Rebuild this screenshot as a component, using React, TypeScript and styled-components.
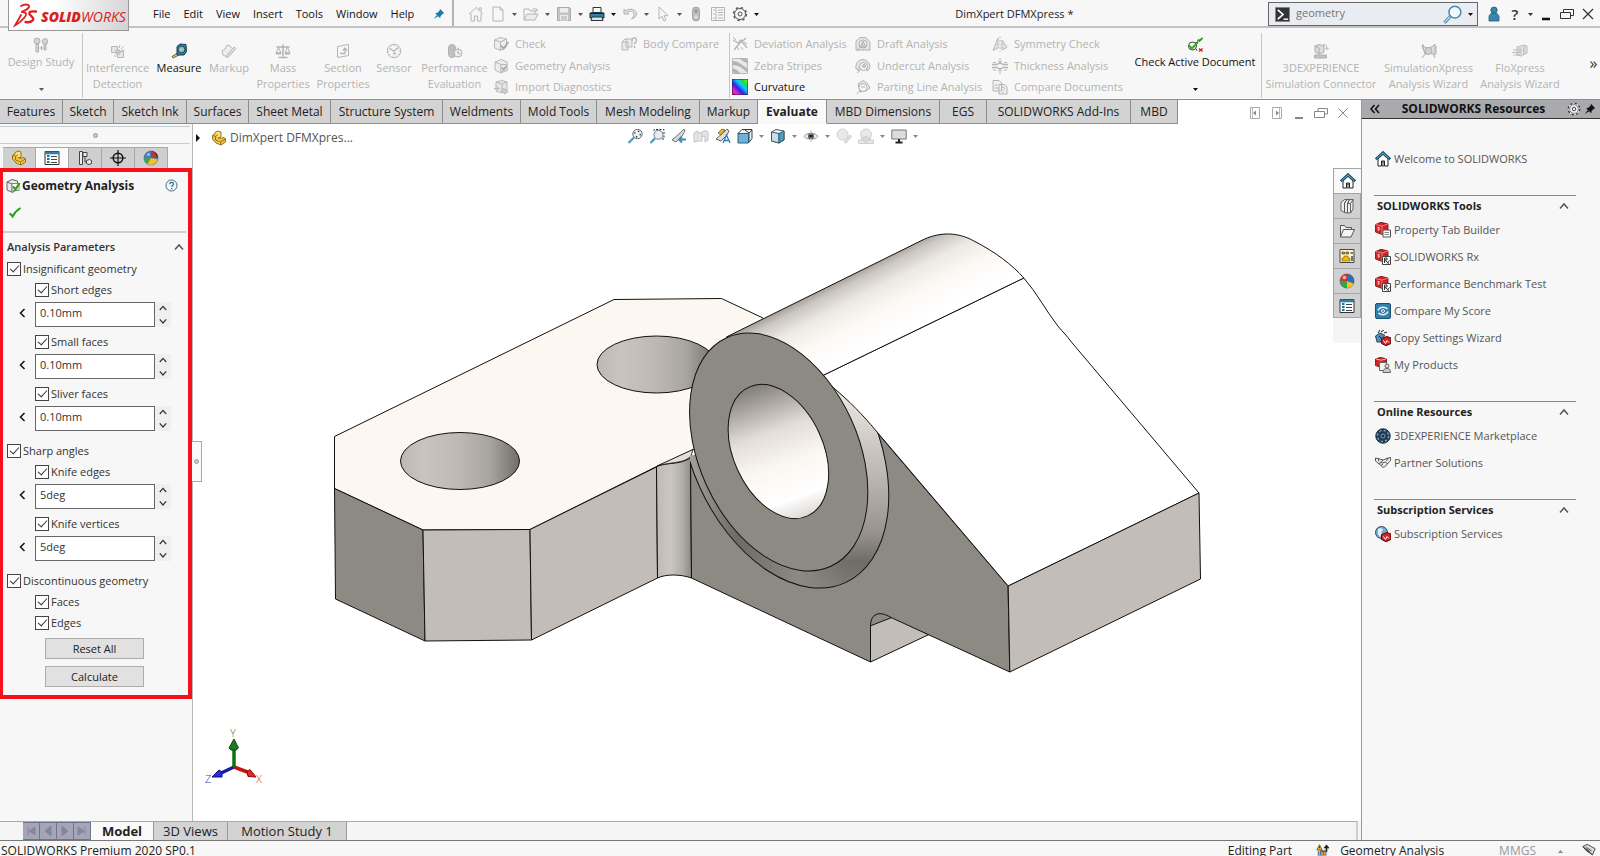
import React from 'react';
import styled, { createGlobalStyle } from 'styled-components';

const GlobalStyle = createGlobalStyle`
  *, *::before, *::after { box-sizing: border-box; }
  html, body { margin: 0; padding: 0; }
  body { font-family: "Open Sans", "Noto Sans", sans-serif; font-size: 11px; line-height: 16px; color: #222; background: #f6f6f6; overflow: hidden; }
  button, input { font: inherit; color: inherit; margin: 0; }
  button { border: 0; padding: 0; background: none; white-space: nowrap; cursor: pointer; }
  h1, h2 { margin: 0; font-size: 11px; line-height: 16px; }
  svg { display: block; flex: none; }
`;

/* ---------- icons ---------- */

const icons: Record<string, React.ReactNode> = {
  pin: <g fill="#1b79ac"><path d="M9 2l5 5-1.6.6-2.6 2.6-.4 2.6L3.6 7l2.6-.4 2.6-2.6z" /><path d="M5.5 9L2 13.6 7 10.6z" /></g>,
  pinDark: <g fill="#111"><path d="M9 2l5 5-1.6.6-2.6 2.6-.4 2.6L3.6 7l2.6-.4 2.6-2.6z" /><path d="M5.5 9L2 13.6 7 10.6z" /></g>,
  home: <g fill="none" stroke="#b4b4b4"><path d="M1 8l7-6.5L15 8" /><path d="M3 7.5V15h3.5v-5h3v5H13V7.5" /><path d="M11.5 3.5V1.8h1.7v3.4" /></g>,
  homeBlue: <g fill="none"><path d="M3 8v7h3.5v-5h3v5H13V8L8 3.4z" fill="#fff" stroke="#222" /><path d="M.8 8.4L8 1.6l7.2 6.8" stroke="#1d4e6e" strokeWidth="2.6" /><path d="M1.6 7.8L8 1.9l6.4 5.9" stroke="#5fb0dc" /><path d="M7 11h2v4H7z" stroke="#222" strokeWidth=".8" /></g>,
  page: <path d="M3 1h7l3 3v11H3zM10 1v3h3" fill="none" stroke="#b4b4b4" />,
  open: <g fill="none" stroke="#b4b4b4"><path d="M1 14V3h5l1 2h5v3" /><path d="M1 14l3-6h11l-3 6z" fill="#ececec" /><path d="M9 4c2-2 4-2 5 1m0-2.5V5h-2.5" /></g>,
  save: <g><path d="M1.5 1.5h12l1 1v12h-13z" fill="#c4c4c4" stroke="#aaa" /><path d="M4 2h8v4.5H4z" fill="#eee" /><path d="M4 9h8v5.5H4z" fill="#ededed" /><path d="M5 11h6M5 13h6" stroke="#aaa" /></g>,
  print: <g><path d="M4 1.5h8v5H4z" fill="#f8f8f8" stroke="#333" /><path d="M1 7h14v5H1z" fill="#2d81ad" stroke="#1b3340" /><path d="M1.5 6.5h13v1.5h-13z" fill="#222" /><path d="M3 11h10l1 3.5H2z" fill="#d5e8f1" stroke="#333" /></g>,
  undo: <path d="M2 3v5h5L5.2 6.3C8 4 12 5.4 12 8.6c0 1.8-1 3-2.5 4.4 3.5-1 5-3 5-5.200C14.500 3.700 8 1.500 3.800 4.800z" fill="#e2e2e2" stroke="#b0b0b0" />,
  cursor: <path d="M4 1v12l3-2.600L9 15l2-1-2-4.300h4z" fill="none" stroke="#b4b4b4" />,
  traffic: <g><rect x="4.500" y="1" width="7" height="14" rx="3.500" fill="#bcbcbc" stroke="#a5a5a5" /><circle cx="8" cy="5" r="1.800" fill="#999" /><circle cx="8" cy="11" r="1.800" fill="#ddd" /></g>,
  list: <g fill="none" stroke="#b4b4b4"><path d="M1.500 1.500h13v13h-13zM6 1.500v13" /><path d="M3 4h2M3 8h2M3 12h2M8 4h5M8 6.500h5M8 9h5M8 12h5" /></g>,
  gear: <g fill="none" stroke="#555"><circle cx="8" cy="8" r="5.500" /><circle cx="8" cy="8" r="2" /><circle cx="8" cy="8" r="6.500" strokeDasharray="2.500 2.600" strokeWidth="1.300" /></g>,
  gearLight: <g fill="#eee" stroke="#333"><circle cx="8" cy="8" r="6.500" strokeDasharray="2.500 2.600" strokeWidth="1.500" /><circle cx="8" cy="8" r="5" stroke="#777" /><circle cx="8" cy="8" r="2" /></g>,
  prompt: <g><path d="M.500 .500h15v15H.500z" fill="#333" stroke="#888" /><path d="M3 3l5.500 5L3 13" fill="none" stroke="#fff" strokeWidth="1.800" /><path d="M9 13h5" stroke="#fff" strokeWidth="1.500" /></g>,
  search: <g><circle cx="10" cy="6" r="5" fill="#f2f8fc" stroke="#4488ae" strokeWidth="1.200" /><path d="M6.300 9.500L1.300 14.800" stroke="#4488ae" strokeWidth="2.600" /><path d="M6 9.800L1.600 14.500" stroke="#d5e8f2" /></g>,
  user: <g fill="#3686ad" stroke="#235d79" strokeWidth=".800"><circle cx="8" cy="4.200" r="3.200" /><path d="M3 15v-4c0-2 1.500-3.500 3-3.500h4c1.500 0 3 1.500 3 3.500v4z" /></g>,
  min: <path d="M4 13h8" stroke="#111" strokeWidth="2.500" />,
  restore: <path d="M4.500 6.500V3.500h10v6h-3M1.500 6.500h10v6h-10z" fill="none" stroke="#333" />,
  close: <path d="M3 3l10 10M13 3L3 13" stroke="#333" strokeWidth="1.200" />,
  minGray: <path d="M4 13h8" stroke="#888" strokeWidth="2" />,
  restoreGray: <path d="M5 6V3.500h9.500v5.500h-3M1.500 6.500h10v6h-10z" fill="none" stroke="#888" />,
  closeGray: <path d="M3.500 3.500l9 9M12.500 3.500l-9 9" stroke="#888" />,
  paneLeft: <g><path d="M3.500 2.500h9v11h-9z" fill="none" stroke="#aaa" /><path d="M9 5.500v5L6 8z" fill="#888" /><path d="M5.500 3v10" stroke="#bbb" /></g>,
  paneRight: <g><path d="M3.500 2.500h9v11h-9z" fill="none" stroke="#aaa" /><path d="M7 5.500v5L10 8z" fill="#888" /><path d="M10.500 3v10" stroke="#bbb" /></g>,
  study: <g fill="#d5d5d5" stroke="#b0b0b0"><circle cx="4" cy="4" r="3" /><path d="M3 7h2.500v8H3zM11 7h2v6h-2z" /><circle cx="12" cy="4.500" r="2.800" /><path d="M6.500 11h4M8.500 9v4" /></g>,
  interfere: <g fill="#e6e6e6" stroke="#b8b8b8"><path d="M1.500 3.500h6v6h-6zM7.500 8.500h6v6h-6z" /><path d="M9 5l1-3M11 6l3-3M11.500 7.500l3-.500M4 12.500l2 1" /><path d="M6 7h4v4H6z" fill="#ccc" /></g>,
  measure: <g><path d="M1 13.500l6-4 1 2.500-6 3z" fill="#efc532" stroke="#333" strokeWidth=".700" /><path d="M6 3.500L9 1l6 .500.500 7L13 12H6z" fill="#2b80ab" stroke="#163d52" /><circle cx="10.500" cy="6.500" r="3.400" fill="#7bbfe0" stroke="#194a64" /><circle cx="10.500" cy="6.500" r="1.300" fill="#efc532" /></g>,
  markup: <g fill="#eee" stroke="#b8b8b8"><path d="M6 2l3 1 3 3-2 5-5 2.500L2 12l-1-4 3-2z" /><path d="M6 12l7-8 2 1.500-7 8-2.500 1z" fill="#ddd" /></g>,
  mass: <g fill="none" stroke="#b2b2b2"><path d="M8 1.500v12M3.500 14.500h9M1.500 4h13" strokeWidth="1.500" /><path d="M1 10l2.500-5.500L6 10zM10 10l2.500-5.500L15 10z" /><path d="M1 10.500h5M10 10.500h5" strokeWidth="2" /></g>,
  section: <g fill="none" stroke="#b4b4b4"><path d="M2.500 3.500l11-2v11l-11 2z" /><path d="M5 10.500h5V6M8 7.500L10 5l2 2.500" strokeWidth="1.300" /></g>,
  sensor: <g fill="none" stroke="#b4b4b4"><circle cx="8" cy="8" r="6.700" /><circle cx="8" cy="8" r="5.300" strokeDasharray="1 2" /><path d="M4 5.500l4 3 4-4M7 10.500h3" strokeWidth="1.300" /></g>,
  perf: <g fill="#d8d8d8" stroke="#b0b0b0"><rect x="1.500" y="1.500" width="7" height="13" rx="3.500" fill="#c3c3c3" /><circle cx="5" cy="5" r="1.500" /><circle cx="5" cy="9.500" r="1.500" /><circle cx="11" cy="10" r="4" fill="#eee" /><path d="M11 7.500V10l2 1M11 4.500v1.500" /></g>,
  check: <g fill="#ececec" stroke="#b8b8b8"><path d="M1.500 4L7 1.500 13.500 3v8L8 14.500 1.500 12zM1.500 4L7.500 6v8M7.500 6l6-3" /><path d="M8 9.500l2.500 3L15.500 6" fill="none" stroke="#a8a8a8" strokeWidth="1.800" /></g>,
  geom: <g fill="#ececec" stroke="#b8b8b8"><path d="M2 4l6-2.500L14 4v8l-6 3-6-3zM2 4l6 2.500V15" /><path d="M8 6.500h6v6.500H8z" /><path d="M9 9.500l1.800 2L13.500 8" fill="none" stroke="#a5a5a5" strokeWidth="1.500" /></g>,
  diag: <g fill="#e6e6e6" stroke="#b8b8b8"><path d="M3 3l6-1.500L14 3v8l-5 3-6-2zM3 3l6 2v9M9 5l5-2" /><path d="M1 9.500h5l-2-2M6 9.500l-2 2" fill="none" /><path d="M8 11.500l2-2 3 1 2 2-3 2.500z" fill="#ccc" /></g>,
  bodycmp: <g fill="#eaeaea" stroke="#b8b8b8"><path d="M1 6h6v8H1zM5 3h6v8H5zM1 6l3-3h2" /><path d="M11 5c0-4 4.500-4 4.500-1 0 2-2 2-2 4.500M13.500 10v2" fill="none" strokeWidth="1.500" /></g>,
  deviation: <g fill="none" stroke="#b4b4b4"><path d="M1 4l5 3 3-3 6 8M2 14l5-6 7-6" strokeWidth="1.300" /><path d="M1 1l3 3M12 6l3 2M9 11l2 3M4 10l3 4" /></g>,
  zebra: <g><path d="M.500 .500h15v15H.500z" fill="#e8e8e8" stroke="#bbb" /><path d="M0 3c6 0 9 3 16 8v4C9 9 6 7 0 7zM5 0c4 1 7 4 11 6V2.500L12 0zM0 10.500c4 0 6 2 9 5.500H4.500L0 14z" fill="#b3b3b3" /></g>,
  curvature: <g><path d="M0 0h16v16H0z" fill="url(#rainbow)" stroke="#222" /></g>,
  draft: <g fill="#e4e4e4" stroke="#b4b4b4"><path d="M1 14V5l4-3.500h6l4 5V14z" /><circle cx="8" cy="8" r="4" fill="#f2f2f2" /><path d="M8 5l3 6H5zM5 11l-3 4" fill="#ccc" /></g>,
  undercut: <g fill="#e4e4e4" stroke="#b4b4b4"><path d="M1 11C0 5 4 1.500 8 1.500S16 6 14.500 11L12 13V9H4v4z" /><circle cx="8.500" cy="8.500" r="4" fill="#f2f2f2" /><path d="M6 11.500L2 15M7 8l2-2 2 2-2 2z" fill="#ccc" /></g>,
  parting: <g fill="#ebebeb" stroke="#b4b4b4"><path d="M3 5l5-3.500L12 4l3 5-4 3-6 1z" /><circle cx="8" cy="8.500" r="4" fill="#f5f5f5" /><path d="M5.500 11.500L1.500 15M6 8h4" /></g>,
  symmetry: <g fill="#e2e2e2" stroke="#b8b8b8"><path d="M6 2v10l-5 2.500zM10 4v10l5-2.500z" /><path d="M8 .500v15" strokeDasharray="2 1.500" /></g>,
  thickness: <g fill="none" stroke="#b4b4b4"><path d="M0 6.500h5c2-1.500 4-1.500 6 0h5M0 9.500h5c2 1.500 4 1.500 6 0h5" strokeWidth="1.300" /><path d="M8 0v5M6 3l2 2 2-2M8 16v-5M6 13l2-2 2 2M1 4.500h3M12 4.500h3M1 12h3M12 12h3" /></g>,
  cmpdocs: <g fill="#f0f0f0" stroke="#b4b4b4"><path d="M1 1.500h6l2.500 2.500v8H1zM7 5.500h5.500L15 8v7H7z" /><path d="M2.500 9h4M2.500 6h3M9.500 9.500c0-2 3-2 3 0 0 1-1.500 1-1.500 2.500" fill="none" /><path d="M11 13v1" /></g>,
  checkDoc: <g fill="none"><circle cx="5.500" cy="9" r="4" stroke="#444" /><path d="M2 8.500l3 3L11 5" stroke="#3da532" strokeWidth="2" /><path d="M8.500 6L11 3.500M9 12.500l2 1" stroke="#222" strokeDasharray="1.500 1" /><path d="M11 2.500l1.500 1.500L15.500 1" stroke="#2d9a25" strokeWidth="1.800" /><path d="M12 11.500l3.500 3M15.500 11.500l-3.500 3" stroke="#d8231f" strokeWidth="1.500" /></g>,
  simcon: <g fill="#ddd" stroke="#aeaeae"><path d="M2 3l4-1.500 5 1.500v6L6 11 2 9zM2 3l4 2v6" /><path d="M1.500 12h12v3h-12z" fill="#c4c4c4" /><path d="M10 2c3-1 4 1 4 4M12.500 5l1.500 1.500L15.500 5" fill="none" /></g>,
  simx: <g fill="#e0e0e0" stroke="#aeaeae"><path d="M1 2l4 3 6-1 3-3v11l-3-2-7 1z" /><circle cx="7.500" cy="8" r="3.500" fill="#d0d0d0" /><path d="M4.500 10.500L1 15M12 11l2 4M2 1v5M15 3v8" /></g>,
  flo: <g fill="#eee" stroke="#bcbcbc"><path d="M5 4l7-2 3 1v7l-6 3-4-1z" /><path d="M7 4v8M9 3.500v9M11.500 3v8.500M13 3v8M1 7h9M0 9.500h9M1 12h6" /></g>,
  part: <g fill="#f3c53a" stroke="#8b6510" strokeWidth=".900"><path d="M1.500 5.500L4 3.500l3 1v3l3 1 2-1 2.500 1V12L10 15l-5-2-3.500-4z" /><path d="M1.500 5.500l3 1v3.500L9.500 12V15M4.500 6.500L7 4.500M9.500 12l5-3M4 3.500v-1L7 1l3 1v5l-3 1" fill="#ffe07a" /></g>,
  props: <g><path d="M1 1.500h14v13H1z" fill="#fff" stroke="#333" /><path d="M1 1.500h14v2.800H1z" fill="#2f7fa8" /><path d="M3 6h2.500M3 9h2.500M3 12h2.500" stroke="#1d6f9d" strokeWidth="2" /><path d="M7 6.500h6M7 9.500h6M7 12.500h6" stroke="#444" /></g>,
  config: <g fill="#eee" stroke="#444"><path d="M2.500 1.500h3v13h-3z" /><path d="M6 2.500h4v4H6zM9.500 10.500l3-1 2 1v3l-2.500 1-2.500-1z" /><path d="M8 7v5h2" fill="none" /></g>,
  target: <g fill="none" stroke="#111" strokeWidth="1.500"><circle cx="8" cy="8" r="4.800" /><path d="M8 0v16M0 8h16" strokeWidth="1.200" /></g>,
  ball: <g><circle cx="8" cy="8" r="7" fill="#2c6dc4" stroke="#444" strokeWidth=".600" /><path d="M8 8L1 7.500A7 7 0 0 0 8 15z" fill="#36a344" /><path d="M8 8v7a7 7 0 0 0 6.500-4.500z" fill="#f3c422" /><path d="M8 8V1a7 7 0 0 0-5.500 2.700L1.200 7.500z" fill="#de3328" /><circle cx="5.500" cy="4.500" r="1.800" fill="#fff" opacity=".600" /></g>,
  ballDark: <g><circle cx="8" cy="8" r="7" fill="#3c7ed0" stroke="#555" strokeWidth=".600" /><path d="M8 8L1 8.500A7 7 0 0 0 4.500 14z" fill="#43a548" /><path d="M8 8l-3.500 6A7 7 0 0 0 14.800 9.500z" fill="#f1c22b" /><path d="M8 8V1a7 7 0 0 1 7 7z" fill="#222" /><path d="M8 8V1a7 7 0 0 1 3 .8L15 8z" fill="#c93129" /><circle cx="5.500" cy="4.500" r="1.600" fill="#fff" opacity=".500" /></g>,
  geomGreen: <g fill="#e8e8e8" stroke="#666"><path d="M1 4l5-2.500L11.500 3v8l-5 3.500L1 12zM1 4l5 2v8" /><path d="M6 5.500h7v7H6z" fill="#fff" stroke="#888" /><path d="M7 8.500l2.500 3L13.500 5" fill="none" stroke="#2fa21e" strokeWidth="2.200" /></g>,
  help: <g><circle cx="8" cy="8" r="6.800" fill="#f2f7fa" stroke="#41667d" strokeWidth="1.200" /><path d="M5.800 6.500c0-3 4.600-3 4.600 0 0 1.500-2.200 1.500-2.200 3.300M8.200 11v1.500" fill="none" stroke="#23688e" strokeWidth="1.500" /></g>,
  ok: <path d="M2.500 9.500c1.500.500 2 1.500 3 3C7.500 8.500 10 6 13.500 4" fill="none" stroke="#2c9b1f" strokeWidth="2" />,
  zoomFit: <g><circle cx="10.500" cy="6" r="4.700" fill="#eef4f7" stroke="#667" /><circle cx="10.500" cy="6" r="2.800" fill="none" stroke="#333" strokeWidth="1.300" strokeDasharray="1.500 2.900" /><path d="M7 9.500L1.500 15" stroke="#5a9cc0" strokeWidth="2.400" /></g>,
  zoomArea: <g><path d="M5 3V1.500h10V11h-2" fill="none" stroke="#333" strokeDasharray="2 1.500" /><circle cx="9.500" cy="6.800" r="4.500" fill="#e6eef2" stroke="#778" /><path d="M6 10.300L1.500 15" stroke="#5a9cc0" strokeWidth="2.400" /></g>,
  prevView: <g><path d="M1 12l8-7 4-4 1 2-3 5-6 6z" fill="#d8d8d8" stroke="#777" /><path d="M15 11.500H8.500m2.500-3l-3 3 3 3" fill="none" stroke="#3a8cba" strokeWidth="2" /></g>,
  sectionView: <g fill="#e6e6e6" stroke="#c4c4c4"><path d="M1 5l4-2v10l-4 1zM7 5l5-2.500L15 4v8l-3 2V8L7 9z" /><path d="M5 5h4v8H5" /></g>,
  dynAnn: <g><path d="M1 11l8-7 3-3 2 2-2 4-6 6z" fill="#ddd" stroke="#666" /><path d="M3 5l4-4 3 1-4 5z" fill="#f0b429" stroke="#7a5a10" strokeWidth=".800" /><path d="M8 15l3.500-8 3.500 8M9.500 12.500h4" fill="none" stroke="#2c7fb0" strokeWidth="1.300" /></g>,
  viewOri: <g><path d="M5 1.500h10v9l-3 4" fill="#eee" stroke="#444" /><path d="M8 2l4 3 3-3M12 5v9" stroke="#444" fill="none" /><path d="M1 5.500h10.500V15H1z" fill="#6db3d6" stroke="#2a5e7b" /><path d="M1 5.500l4-4M5 1.500h10" stroke="#333" /></g>,
  display: <g stroke="#3c5a69"><path d="M1.500 4L6 1.500 14 3v9l-5 3-7.500-2z" fill="#f2f6f8" /><path d="M1.500 4L9 5.500V15l-7.500-2z" fill="#c9dde8" /><path d="M9 5.500L14 3v9l-5 3z" fill="#4f9cc4" /></g>,
  eye: <g><path d="M1 8.500C4 4 12 4 15 8.500 12 12 4 12 1 8.500z" fill="#eee" stroke="#999" /><circle cx="8" cy="8.200" r="3" fill="#555" /><path d="M8 2v12" stroke="#bbb" /><circle cx="8" cy="8" r="1.200" fill="#111" /></g>,
  appear: <g fill="#e8e8e8" stroke="#d0d0d0"><circle cx="6.500" cy="6.500" r="5.500" /><path d="M8 14l6-7 1.500 1.500L10 15z" fill="#ddd" /></g>,
  scene: <g fill="#e8e8e8" stroke="#d0d0d0"><path d="M.500 12h15v3.500H.500z" /><circle cx="8" cy="6.500" r="5.500" /><path d="M3 11l5-3 5 3-5 4z" fill="#d8d8d8" /></g>,
  monitor: <g><path d="M.800 2h14.400v9H.800z" fill="#dcdcdc" stroke="#777" /><path d="M8 11v3M4.500 14.500h7" stroke="#222" strokeWidth="2" /></g>,
  books: <g fill="#eee" stroke="#555" strokeWidth=".900"><path d="M2 4.500l3.500-3H8L5.500 5v9.500L2 12.500zM5.500 5L8 1.500h2.500L8.500 5.500v9.500l-3-.500zM8.500 5.500l2-4H14v9.500l-2.500 4h-3z" /><path d="M11.500 5.500L14 1.500M8.500 5.500h3V15" fill="none" /></g>,
  folder: <g fill="#eee" stroke="#555"><path d="M1.500 14V2.500h4l1.500 2h5.500V7" /><path d="M1.500 14l3-7.500H15.500L12 14z" fill="#f5f5f5" /></g>,
  palette: <g><path d="M1 1.500h14v13H1z" fill="#fff6c8" stroke="#444" /><path d="M3 4h2.500v2H3zM7 4h2.500v2H7z" fill="#e6b000" stroke="#222" strokeWidth=".600" /><path d="M5 8h4v2h2v3H3v-3h2z" fill="#e9bb15" stroke="#7a5a00" strokeWidth=".600" /><path d="M11.500 4h2.500v2h-2.500zM12 8h2.500v5H12z" fill="#777" /></g>,
  swTab: <g><path d="M.500 2.500L6 .300l7 1.700v7.500L7 12.500.500 10z" fill="#cf2327" stroke="#6b0d10" strokeWidth=".800" /><path d="M.500 2.500l6.500 1.500 6-2M7 4v8.500" stroke="#f39a9c" strokeWidth=".800" fill="none" /><path d="M2.500 5.800c1.800-.800 2.400.200 1 1 1.500.500.800 1.800-.800 1.200" stroke="#fff" fill="none" /><path d="M8 8h7.500v7H8z" fill="#fff" stroke="#555" /><path d="M9.500 10.500h4.500M9.500 12.500h4.500" stroke="#888" /></g>,
  swRx: <g><path d="M.500 2.500L6 .300l7 1.700v7.500L7 12.500.500 10z" fill="#cf2327" stroke="#6b0d10" strokeWidth=".800" /><path d="M.500 2.500l6.500 1.500 6-2M7 4v8.500" stroke="#f39a9c" strokeWidth=".800" fill="none" /><path d="M2.500 5.800c1.800-.800 2.400.200 1 1 1.500.500.800 1.800-.800 1.200" stroke="#fff" fill="none" /><path d="M7.500 7.500h8v8h-8z" fill="#fff" stroke="#444" /><path d="M9.500 14V9h2.500v2H9.500l4.500 3.500M14.500 11.500l-2.500 3" stroke="#333" fill="none" /></g>,
  score: <g><rect x=".500" y=".500" width="15" height="15" rx="1.500" fill="#3280ab" stroke="#1d4f6d" /><path d="M3 7.500C5 3.500 10 3.500 12.500 6M13 8.500c-2 4-7 4-9.500 1.500" fill="none" stroke="#e6f2f8" strokeWidth="1.600" /><circle cx="8" cy="8" r="1.500" fill="none" stroke="#e6f2f8" /></g>,
  copy: <g><path d="M.500 6l4.500-3 4.500 2-2 7H2z" fill="#4a92bd" stroke="#222" strokeWidth=".800" /><path d="M3 3l2-3M6 2l3-2M9 3l3-1M4 6l6 6" stroke="#222" /><path d="M6.500 8.500l5.500-2 4 1.500v5.500L11 15.700 6.500 13.500z" fill="#cf2327" stroke="#5a0a0c" /><path d="M8.500 10.500l2 3 1.500-3 2 2" stroke="#fff" fill="none" /></g>,
  products: <g><path d="M.500 2L5.500 .300 11.500 2v6.500L6 10.500.500 8.500z" fill="#cf2327" stroke="#6b0d10" strokeWidth=".800" /><path d="M1 2l5 1.200L11 2" stroke="#fff" strokeWidth=".700" fill="none" /><path d="M4.500 5.500h7v8h-7z" fill="#eef5ea" stroke="#666" /><circle cx="12" cy="9" r="2" fill="#ddd" stroke="#666" /><path d="M8 15.500c0-3 1.500-4 4-4s3.500 1 3.500 4z" fill="#ccc" stroke="#666" /></g>,
  market: <g><circle cx="8" cy="8" r="7.200" fill="#24435f" stroke="#14283a" /><circle cx="8" cy="8" r="5.600" fill="none" stroke="#8fa9bf" strokeDasharray="2 2.400" strokeWidth="1.300" /><circle cx="8" cy="8" r="3.300" fill="#5a7f9f" stroke="#102a40" /><circle cx="8" cy="8" r="1.200" fill="#17344e" /></g>,
  shake: <g fill="#eee" stroke="#444" strokeWidth=".900"><path d="M.500 3l2.500.500L8 5l5-2 2.500-.500v3L9.500 12 8 12.300.500 6z" /><path d="M8 5L6 7.500l2 .500 2-1 3 2M4 8.500l2-1M6 10.500l2-1.500M13 3l-1.500 3M3 3.500l1 3" fill="none" /></g>,
  globe: <g><circle cx="6.500" cy="6.500" r="6" fill="#78acd0" stroke="#274d66" /><path d="M3 3l3-1 2 2-2 2 1 2-2 3-2-3z" fill="#e4f0f7" /><path d="M6.500 8.500l5.500-2 4 1.500v5.500L11 15.700 6.500 13.500z" fill="#cf2327" stroke="#5a0a0c" /><path d="M8.500 10.500l2 3 1.500-3 2 2" stroke="#fff" fill="none" /></g>,
  rebuild: <g><path d="M1 8l3-6 3 6z" fill="#f4c430" stroke="#6b4d00" /><path d="M4 4v2" stroke="#222" /><path d="M5 9.500h7V4M9.500 6L12 3l2.500 3" fill="none" stroke="#222" strokeWidth="1.800" /><path d="M2 9.500h10v5H2z" fill="#3a78c2" /><path d="M4 10v5M7 10v5M10 10v5" stroke="#f7a928" strokeWidth="1.500" /></g>,
  tag: <g fill="#ddd" stroke="#333"><path d="M1 4l5-2.500 9 5-3 7z" /><path d="M1 4l4 5 7 4.500M5 5l6 4M4 6l5 4" fill="none" /></g>,
};

const Icon = ({ name, size = 16 }: { name: string; size?: number }) => (
  <svg width={size} height={size} viewBox="0 0 16 16" aria-hidden="true">{icons[name]}</svg>
);

const Caret = ({ color = '#555', up = false }: { color?: string; up?: boolean }) => (
  <svg width="5" height="5" viewBox="0 0 5 5" aria-hidden="true"><path d={up ? 'M0 4h5L2.500 1z' : 'M0 1h5L2.500 4z'} fill={color} /></svg>
);

const Chevron = ({ dir, color = '#333', w = 10 }: { dir: 'up' | 'down' | 'left'; color?: string; w?: number }) => {
  const d = { up: 'M1 7.500L5 3l4 4.500', down: 'M1 3l4 4.500L9 3', left: 'M7.500 1L3.500 5l4 4' }[dir];
  return <svg width={w} height={w} viewBox="0 0 10 10" aria-hidden="true"><path d={d} fill="none" stroke={color} strokeWidth="1.500" /></svg>;
};

/* ---------- shell and title bar ---------- */

const Shell = styled.div`
  display: flex; flex-direction: column; height: 100vh; min-height: 600px; overflow: hidden;
`;
const TitleBar = styled.header`
  position: relative; display: flex; align-items: center; height: 28px; flex: none;
  padding: 2px 0 0 153px; border-bottom: 2px solid #c3c3c3; background: #f7f7f7;
`;
const Logo = styled.div`
  position: absolute; z-index: 2; left: 8px; top: 0; width: 121px; height: 31px; padding: 1px 3px 0 4px;
  display: flex; align-items: center; gap: 3px; border: 1px solid #999; border-top: 0;
  background: linear-gradient(110deg, #fff 35%, #d2d2d4); color: #d8211d;
  font-size: 14px; font-style: italic; line-height: 16px;
  span { padding-top: 3px; }
  b { font-weight: 800; }
`;
const Menu = styled.nav` display: flex; gap: 13px; `;
const MenuItem = styled.button` color: #111; line-height: 24px; `;
const PinButton = styled.button` margin-left: 18px; `;
const ToolStrip = styled.div<{ $left?: number }>` display: flex; align-items: center; gap: 6px; margin-left: ${(p) => p.$left ?? 0}px; `;
const ToolButton = styled.button` display: flex; align-items: center; gap: 6px; height: 24px; `;
const BarSplit = styled.i` width: 2px; height: 26px; margin: 0 0 2px 6px; background: #b2b2b2; `;
const DocTitle = styled.h1` margin-left: 196px; font-weight: 400; white-space: nowrap; color: #222; `;
const SearchBox = styled.form`
  display: flex; align-items: center; gap: 6px; width: 210px; height: 24px; margin-left: auto; padding: 0 4px 0 6px;
  border: 1px solid #666; background: #e9ecf0; color: #777;
  input { flex: 1; min-width: 0; border: 0; padding: 0 0 2px; background: none; outline: 0; }
`;
const WindowControls = styled.div`
  display: flex; align-items: center; gap: 5px; padding: 0 4px 0 8px;
  b { display: block; width: 16px; text-align: center; font-size: 15px; font-weight: 600; line-height: 16px; color: #333; }
`;

/* ---------- ribbon ---------- */

const Ribbon = styled.div`
  display: flex; flex: none; height: 72px; padding-top: 5px; background: #f7f7f7; border-bottom: 1px solid #8e8e8e; color: #b3b3b3;
`;
const RibbonGroup = styled.div<{ $grow?: boolean; $line?: boolean; $pad?: number }>`
  display: flex; flex: ${(p) => (p.$grow ? '1 1 auto' : 'none')}; padding-left: ${(p) => p.$pad ?? 0}px;
  border-right: ${(p) => (p.$line ? '1px solid #c6c6c6' : '0')};
  height: 65px;
`;
const BigButton = styled.button<{ $w: number; $active?: boolean; $high?: boolean }>`
  display: flex; flex-direction: column; align-items: center; flex: none; width: ${(p) => p.$w}px;
  padding-top: ${(p) => (p.$high ? 4 : 10)}px; color: ${(p) => (p.$active ? '#111' : '#b3b3b3')};
  line-height: 16px; gap: 1px;
  > svg:last-child:not(:first-child) { margin-top: 16px; }
`;
const SmallColumn = styled.div<{ $w: number }>` display: flex; flex-direction: column; flex: none; width: ${(p) => p.$w}px; `;
const SmallButton = styled.button<{ $active?: boolean }>`
  display: flex; align-items: center; gap: 6px; height: 22px; color: ${(p) => (p.$active ? '#111' : '#b3b3b3')};
`;
const More = styled.button` margin-left: auto; width: 13px; height: 60px; font-size: 16px; color: #333; `;

/* ---------- document area ---------- */

const Body = styled.div` display: flex; flex: 1; min-height: 0; `;
const DocumentColumn = styled.div` display: flex; flex-direction: column; flex: 1; min-width: 0; `;
const TabRow = styled.div` display: flex; flex: none; height: 24px; background: #fff; `;
const RibbonTab = styled.button<{ $w: number; $on?: boolean }>`
  flex: none; width: ${(p) => p.$w}px; font-size: 12px;
  border-right: 1px solid #8d8d8d; border-bottom: 1px solid ${(p) => (p.$on ? '#f7f7f7' : '#8d8d8d')};
  background: ${(p) => (p.$on ? '#f9f9f9' : '#d3d3d3')}; font-weight: ${(p) => (p.$on ? 700 : 400)}; color: #222;
`;
const DocControls = styled.div` display: flex; align-items: center; gap: 6px; margin-left: auto; padding: 1px 10px 0 0; `;
const Work = styled.div` display: flex; flex: 1; min-height: 0; `;

const SidePanel = styled.aside`
  position: relative; display: flex; flex-direction: column; flex: none; width: 193px;
  background: #f7f7f7; border-right: 1px solid #b8b8b8;
`;
const Grip = styled.div`
  display: flex; flex: none; align-items: center; justify-content: center; height: 18px; margin: 2px 2px 3px 0;
  border-top: 1px solid #c2cdd2; border-bottom: 1px solid #ccc;
`;
const GripDot = styled.i` width: 5px; height: 5px; border-radius: 50%; background: #ccc; border: 1px solid #999; `;
const PanelTabs = styled.div` display: flex; flex: none; height: 21px; padding-left: 3px; `;
const PanelTab = styled.button<{ $on?: boolean }>`
  display: flex; align-items: center; justify-content: center; width: 33px; border: 1px solid #a8a8a8; border-left: 0; border-bottom: 0;
  background: ${(p) => (p.$on ? '#fafafa' : '#cfcfcf')};
`;
const PropertyPage = styled.form` flex: none; border: 4px solid #f5101c; border-left-width: 3px; padding-bottom: 8px; `;
const PageTitle = styled.div`
  display: flex; align-items: center; height: 28px; padding: 0 10px 1px 3px; color: #222;
  h2 { flex: 1; font-size: 12px; }
`;
const OkRow = styled.div` display: flex; align-items: flex-start; height: 33px; padding: 4px 0 0 4px; border-bottom: 2px solid #d0d0d0; margin: 0 2px 3px 0; `;
const SectionHead = styled.div` display: flex; align-items: center; justify-content: space-between; height: 22px; padding: 0 4px; h2 { color: #333; font-weight: 600; } `;
const CheckLabel = styled.label<{ $sub?: boolean }>`
  display: flex; align-items: center; gap: 2px; height: 21px; padding-left: ${(p) => (p.$sub ? 32 : 4)}px; color: #333;
`;
const Tick = styled.input`
  appearance: none; flex: none; width: 14px; height: 14px; border: 1px solid #444; background: #fff; display: grid; place-items: center;
  &:checked::before { content: ""; width: 9px; height: 5px; margin-bottom: 3px; border: solid #333; border-width: 0 0 1px 1px; transform: rotate(-48deg); }
`;
const FieldRow = styled.div` display: flex; align-items: center; height: 25px; margin: 2px 0 4px; padding-left: 14px; > svg { margin-bottom: 4px; } `;
const FieldInput = styled.input` width: 120px; height: 25px; margin-left: 8px; padding: 0 4px 4px; border: 1px solid #666; background: #fff; color: #333; outline: 0; `;
const Spinner = styled.div`
  display: flex; flex-direction: column; justify-content: space-around; align-items: center; width: 16px; height: 25px; background: #efefef;
  button { height: 10px; display: flex; align-items: center; }
`;
const FieldGroup = styled.section` display: flow-root; padding-bottom: 5px; `;
const Actions = styled.div` display: flex; flex-direction: column; gap: 7px; padding-left: 42px; `;
const ActionButton = styled.button` width: 99px; height: 21px; border: 1px solid #adadad; background: #e1e1e1; color: #222; `;
const Splitter = styled.button`
  position: absolute; z-index: 2; left: 192px; top: 317px; width: 10px; height: 41px; display: grid; place-items: center;
  border: 1px solid #aaa; border-left: 0; background: #fafafa;
`;

const Viewport = styled.main`
  position: relative; display: grid; grid-template: minmax(0, 1fr) / minmax(0, 1fr); flex: 1; min-width: 0; background: #fff;
  > * { grid-area: 1 / 1; }
`;
const Model = styled.svg` width: 100%; height: 100%; `;
const Triad = styled.svg` align-self: end; margin: 0 0 34px 10px; `;
const TreeRoot = styled.button`
  align-self: start; justify-self: start; display: flex; align-items: center; gap: 3px; height: 24px; margin: 2px 0 0 3px; color: #555; font-size: 12px;
  > svg + svg { margin-left: 7px; }
`;
const HeadsUp = styled(ToolStrip)` align-self: start; justify-self: center; margin-right: 10px; gap: 6px; `;
const Rail = styled.nav`
  position: absolute; right: 0; top: 44px; display: flex; flex-direction: column; width: 28px; height: 175px; background: #f5f5f5;
`;
const RailTab = styled.button<{ $on?: boolean }>`
  display: grid; place-items: center; height: 25px; border: 1px solid #a5a5a5; border-bottom-width: 0;
  border-right-width: ${(p) => (p.$on ? 0 : 1)}px; background: ${(p) => (p.$on ? '#f9f9f9' : '#d0d0d0')};
  &:last-child { border-bottom-width: 1px; }
`;

/* ---------- bottom bars ---------- */

const BottomTabs = styled.div`
  display: flex; flex: none; height: 19px; padding-left: 23px; margin-right: 3px; background: #f5f5f5;
  border-top: 1px solid #aaa; border-right: 2px solid #c9ced0;
`;
const StepButton = styled.button` width: 17px; display: grid; place-items: center; background: #a4a5b8; border: 1px solid #74758c; border-width: 1px 1px 1px 0; `;
const SheetTab = styled.button<{ $w: number; $on?: boolean }>`
  width: ${(p) => p.$w}px; font-size: 13px; line-height: 18px; border-right: 1px solid #999;
  background: ${(p) => (p.$on ? '#fafafa' : '#d3d3d3')}; font-weight: ${(p) => (p.$on ? 700 : 400)};
`;
const StatusBar = styled.footer`
  display: flex; flex: none; height: 16px; padding: 0 4px 0 1px; align-items: flex-start; overflow: hidden;
  border-top: 1px solid #777; background: #f7f7f7; font-size: 12px; line-height: 20px; color: #222; white-space: nowrap;
`;
const StatusMode = styled.span` margin-left: auto; `;
const StatusIcon = styled.span<{ $l: number; $r: number }>` margin: 2px ${(p) => p.$r}px 0 ${(p) => p.$l}px; `;
const Units = styled.button` display: flex; align-items: center; gap: 22px; margin-left: 55px; color: #999; `;

/* ---------- resources panel ---------- */

const Resources = styled.aside` flex: none; width: 239px; background: #f7f7f7; border-left: 1px solid #999; `;
const ResourcesHead = styled.div`
  display: flex; align-items: center; gap: 2px; height: 19px; padding: 0 3px 0 8px; background: #a9aaad; border-bottom: 1px solid #333; color: #111;
  h2 { flex: 1; text-align: center; font-size: 12px; }
`;
const ResourceBody = styled.div` padding: 26px 24px 0 12px; display: flex; flex-direction: column; gap: 23px; `;
const ResourceLink = styled.a`
  display: flex; align-items: center; gap: 3px; height: 27px; padding-left: 1px; color: #555; text-decoration: none; white-space: nowrap;
`;
const ResourceGroup = styled.section` border-top: 1px solid #888; `;
const ResourceTitle = styled.div` display: flex; align-items: center; justify-content: space-between; height: 20px; padding: 0 7px 0 3px; h2 { color: #222; } `;

/* ---------- data ---------- */

const menus = ['File', 'Edit', 'View', 'Insert', 'Tools', 'Window', 'Help'];
const quickTools: [string, string, boolean, string?][] = [
  ['Home', 'home', false], ['New', 'page', true], ['Open', 'open', true], ['Save', 'save', true], ['Print', 'print', true, '#111'],
  ['Undo', 'undo', true], ['Select', 'cursor', true], ['Rebuild', 'traffic', false], ['File properties', 'list', false], ['Options', 'gear', true, '#111'],
];
const evaluateTools: [string[], string, number, boolean?][] = [
  [['Interference', 'Detection'], 'interfere', 69], [['Measure'], 'measure', 54, true], [['Markup'], 'markup', 46],
  [['Mass', 'Properties'], 'mass', 62], [['Section', 'Properties'], 'section', 58], [['Sensor'], 'sensor', 44], [['Performance', 'Evaluation'], 'perf', 77],
];
const xpressTools: [string[], string, number][] = [
  [['3DEXPERIENCE', 'Simulation Connector'], 'simcon', 118], [['SimulationXpress', 'Analysis Wizard'], 'simx', 97], [['FloXpress', 'Analysis Wizard'], 'flo', 86],
];
const checkColumns: [number, [string, string, boolean?][]][] = [
  [128, [['Check', 'check'], ['Geometry Analysis', 'geom'], ['Import Diagnostics', 'diag']]],
  [108, [['Body Compare', 'bodycmp']]],
];
const surfaceColumns: [number, [string, string, boolean?][]][] = [
  [123, [['Deviation Analysis', 'deviation'], ['Zebra Stripes', 'zebra'], ['Curvature', 'curvature', true]]],
  [137, [['Draft Analysis', 'draft'], ['Undercut Analysis', 'undercut'], ['Parting Line Analysis', 'parting']]],
  [137, [['Symmetry Check', 'symmetry'], ['Thickness Analysis', 'thickness'], ['Compare Documents', 'cmpdocs']]],
];
const ribbonTabs: [string, number][] = [
  ['Features', 63], ['Sketch', 51], ['Sketch Ink', 73], ['Surfaces', 62], ['Sheet Metal', 82], ['Structure System', 112], ['Weldments', 78],
  ['Mold Tools', 76], ['Mesh Modeling', 103], ['Markup', 58], ['Evaluate', 69], ['MBD Dimensions', 113], ['EGS', 47], ['SOLIDWORKS Add-Ins', 144], ['MBD', 47],
];
const viewTools: [string, string, boolean][] = [
  ['Zoom to fit', 'zoomFit', false], ['Zoom to area', 'zoomArea', false], ['Previous view', 'prevView', false], ['Section view', 'sectionView', false],
  ['Dynamic annotation', 'dynAnn', false], ['View orientation', 'viewOri', true], ['Display style', 'display', true], ['Hide or show items', 'eye', true],
  ['Edit appearance', 'appear', false], ['Apply scene', 'scene', true], ['View settings', 'monitor', true],
];
const geometryGroups: { title: string; items: { label: string; value?: string }[] }[] = [
  { title: 'Insignificant geometry', items: [{ label: 'Short edges', value: '0.10mm' }, { label: 'Small faces', value: '0.10mm' }, { label: 'Sliver faces', value: '0.10mm' }] },
  { title: 'Sharp angles', items: [{ label: 'Knife edges', value: '5deg' }, { label: 'Knife vertices', value: '5deg' }] },
  { title: 'Discontinuous geometry', items: [{ label: 'Faces' }, { label: 'Edges' }] },
];
const resourceGroups: [string, [string, string][]][] = [
  ['SOLIDWORKS Tools', [['Property Tab Builder', 'swTab'], ['SOLIDWORKS Rx', 'swRx'], ['Performance Benchmark Test', 'swRx'], ['Compare My Score', 'score'], ['Copy Settings Wizard', 'copy'], ['My Products', 'products']]],
  ['Online Resources', [['3DEXPERIENCE Marketplace', 'market'], ['Partner Solutions', 'shake']]],
  ['Subscription Services', [['Subscription Services', 'globe']]],
];
const steps: [string, string][] = [
  ['First', 'M3 2v8M10 2v8L4 6z'], ['Previous', 'M9 1v10L3 6z'], ['Next', 'M3 1v10l6-5z'], ['Last', 'M9 2v8M2 2v8l6-4z'],
];

/* ---------- parts ---------- */

const SmallColumns = ({ columns }: { columns: typeof checkColumns }) => (
  <>
    {columns.map(([w, rows]) => (
      <SmallColumn key={rows[0][0]} $w={w}>
        {rows.map(([label, icon, active]) => (
          <SmallButton key={label} $active={active}><Icon name={icon} />{label}</SmallButton>
        ))}
      </SmallColumn>
    ))}
  </>
);

const BracketModel = () => (
  <Model viewBox="193 124 1168 697" preserveAspectRatio="xMidYMid meet" role="img" aria-label="Bracket part">
    <defs>
      <linearGradient id="bore" x1="0" x2="1"><stop offset="0" stopColor="#bdb8b3" /><stop offset=".2" stopColor="#c9c4bf" /><stop offset=".5" stopColor="#bdb8b3" /><stop offset=".75" stopColor="#a8a4a0" /><stop offset="1" stopColor="#716d6a" /></linearGradient>
      <linearGradient id="fillet" x1="0" x2="1"><stop offset="0" stopColor="#bfbab6" /><stop offset=".4" stopColor="#cbc6c1" /><stop offset=".75" stopColor="#b0aca7" /><stop offset="1" stopColor="#8d8984" /></linearGradient>
      <linearGradient id="barrel" gradientUnits="userSpaceOnUse" x1="825" y1="287" x2="857" y2="350"><stop offset="0" stopColor="#a39f9a" /><stop offset=".12" stopColor="#cbc6c1" /><stop offset=".35" stopColor="#ece8e3" /><stop offset=".65" stopColor="#fcf9f5" /><stop offset="1" stopColor="#fff" /></linearGradient>
      <linearGradient id="tube" gradientUnits="userSpaceOnUse" x1="748" y1="388" x2="796" y2="520"><stop offset="0" stopColor="#827e7a" /><stop offset=".12" stopColor="#a39e9a" /><stop offset=".35" stopColor="#e2ddd8" /><stop offset=".6" stopColor="#fbf7f2" /><stop offset=".85" stopColor="#fff" /><stop offset="1" stopColor="#ddd8d3" /></linearGradient>
      <linearGradient id="ring" gradientUnits="userSpaceOnUse" x1="0" y1="385" x2="0" y2="588"><stop offset="0" stopColor="#f0ece7" /><stop offset=".25" stopColor="#d3cec9" /><stop offset=".5" stopColor="#b5b0ab" /><stop offset=".72" stopColor="#99948f" /><stop offset=".87" stopColor="#706c67" /><stop offset="1" stopColor="#7f7b76" /></linearGradient>
      <linearGradient id="ringLeft" gradientUnits="userSpaceOnUse" x1="690" y1="0" x2="845" y2="0"><stop offset="0" stopColor="#a5a09b" /><stop offset=".3" stopColor="#6d6965" /><stop offset=".7" stopColor="#8d8984" /><stop offset="1" stopColor="#8d8984" stopOpacity="0" /></linearGradient>
      <clipPath id="ringClip"><path d="M690 455L778 450 822 376 875 428 920 480V620H690z" /></clipPath>
      <clipPath id="ringShape"><ellipse cx="784.500" cy="449" rx="146.500" ry="92.700" transform="rotate(65.500 784.500 449)" /></clipPath>
      <clipPath id="tubeShape"><ellipse cx="778.400" cy="451.500" rx="70.700" ry="44.800" transform="rotate(65.500 778.400 451.500)" /></clipPath>
    </defs>
    <g stroke="#111" strokeWidth="1" strokeLinejoin="round">
      <path d="M334.500 436.500L614 299.500 721.500 298.500 763 318 790 400 692 450 656.500 466.500 530 529.500 423 530 334.500 488.500z" fill="#fcf7f1" />
      <path d="M334.500 488.500L423 530 425 641 335.500 599z" fill="#8d8a84" />
      <path d="M423 530L530 529.500 531.500 640 425 641z" fill="#c3bdb9" />
      <path d="M530 529.500L656.500 467 657.500 578 531.500 640z" fill="#c3bdb9" />
      <path d="M656.500 466.500C668 462 680 465 690.500 458L691.500 578C680 574 666 574 657.500 578z" fill="url(#fillet)" />
      <path d="M657 466L693 449.500 691 456C684 464 668 462 657 466z" fill="#e3deda" strokeWidth=".8" />
      <ellipse cx="460" cy="461" rx="59.500" ry="28.500" fill="url(#bore)" />
      <ellipse cx="656.500" cy="364.500" rx="59.500" ry="28.500" fill="url(#bore)" />
      <path d="M868 626L891 615 929 634.500 870.500 662z" fill="#c3bdb9" />
      <path d="M870 626C870 612 880 610 893 617z" fill="#8d8984" />
      <path d="M690.500 458L778 450 831 385 875 430 1008 586 1009.800 672 891 617.500C879 610 870.500 614 870.500 626V662L691.500 578z" fill="#8d8a84" />
      <g clipPath="url(#ringClip)">
        <g clipPath="url(#ringShape)" stroke="none">
          <path d="M690 370H890V600H690z" fill="url(#ring)" />
          <path d="M690 455L778 450 845 540V600H690z" fill="url(#ringLeft)" />
        </g>
        <ellipse cx="784.500" cy="449" rx="146.800" ry="93" transform="rotate(65.500 784.500 449)" fill="none" />
      </g>
      <path d="M821.800 376L1023.800 278C1037 293 1046 311 1058.600 327 1063 332 1067 336 1071.400 342L1199 493 1008.200 586 875.400 430C863.600 416 848.600 400 833.600 388z" fill="#fff" />
      <path d="M726.400 337L924.600 239C940.700 232 957.900 232 973.900 241 995.400 252 1012.500 265 1023.800 278L821.800 376 778 420z" fill="url(#barrel)" />
      <path d="M1008.200 586L1199 493 1200.500 579 1009.800 672z" fill="#c3bdb9" />
      <ellipse cx="778.700" cy="452" rx="125.600" ry="79.500" transform="rotate(65.500 778.700 452)" fill="#8d8a84" />
      <path d="M720 380H840V525H720z" fill="url(#tube)" stroke="none" clipPath="url(#tubeShape)" />
      <ellipse cx="778.400" cy="451.500" rx="70.700" ry="44.800" transform="rotate(65.500 778.400 451.500)" fill="none" />
    </g>
  </Model>
);

const AxisTriad = () => (
  <Triad width="64" height="66" viewBox="203 721 64 66" aria-hidden="true">
    <g strokeWidth="3.500"><path d="M234 767L219 774" stroke="#1c1ca0" /><path d="M234 767L250 773" stroke="#c51212" /><path d="M234 767V748" stroke="#127012" /></g>
    <path d="M229 748l5-9 4.500 9-2.500 2h-5z" fill="#1e7a22" stroke="#0b4b0e" />
    <path d="M212 777l7-7 3 2v5z" fill="#2a2ae0" stroke="#111180" />
    <path d="M256 777l-6-7.500-3 2 1 5z" fill="#e22" stroke="#8c0b0b" />
    <g fontFamily="Open Sans, sans-serif" fontSize="11" fontWeight="300"><text x="230" y="737" fill="#2c8c3c">Y</text><text x="205" y="783" fill="#4242b8">Z</text><text x="256" y="783" fill="#cf3535">X</text></g>
  </Triad>
);

const GeometryPage = () => (
  <PropertyPage onSubmit={(e) => e.preventDefault()}>
    <PageTitle><Icon name="geomGreen" /><h2>Geometry Analysis</h2><button type="button" aria-label="Help"><Icon name="help" size={13} /></button></PageTitle>
    <OkRow><button type="button" aria-label="OK"><Icon name="ok" /></button></OkRow>
    <SectionHead><h2>Analysis Parameters</h2><Chevron dir="up" color="#555" /></SectionHead>
    {geometryGroups.map((group) => (
      <FieldGroup key={group.title}>
        <CheckLabel><Tick type="checkbox" defaultChecked />{group.title}</CheckLabel>
        {group.items.map(({ label, value }) => (
          <React.Fragment key={label}>
            <CheckLabel $sub><Tick type="checkbox" defaultChecked />{label}</CheckLabel>
            {value && (
              <FieldRow>
                <Chevron dir="left" color="#111" />
                <FieldInput aria-label={label} defaultValue={value} />
                <Spinner>
                  <button type="button" aria-label={`Increase ${label}`}><Chevron dir="up" w={8} /></button>
                  <button type="button" aria-label={`Decrease ${label}`}><Chevron dir="down" w={8} /></button>
                </Spinner>
              </FieldRow>
            )}
          </React.Fragment>
        ))}
      </FieldGroup>
    ))}
    <Actions><ActionButton type="button">Reset All</ActionButton><ActionButton type="button">Calculate</ActionButton></Actions>
  </PropertyPage>
);

export default function App() {
  return (
    <Shell>
      <GlobalStyle />
      <TitleBar>
        <Logo>
          <svg width="25" height="25" viewBox="0 0 25 25" aria-hidden="true">
            <defs><linearGradient id="rainbow" x1="0" y1="1" x2="1" y2="0"><stop offset="0" stopColor="#f00080" /><stop offset=".2" stopColor="#f020d0" /><stop offset=".4" stopColor="#3020f0" /><stop offset=".6" stopColor="#10c8f0" /><stop offset=".8" stopColor="#20e040" /><stop offset="1" stopColor="#f0e020" /></linearGradient></defs>
            <g fill="none" stroke="#d8211d" strokeWidth="1.800" strokeLinecap="round"><path d="M8 3C12 .8 17 1 16 4 15 6 12 7.500 9 8.500" /><path d="M9 9C14 9 14 12 11 15 8 18.500 5 21 2 22.500L8 12" /><path d="M23 8.500C19 8 15.500 8.500 16.500 11 17.500 13.500 21.500 14.500 20 17 18.500 19 15 19.500 12.500 19" strokeWidth="2.300" /></g>
          </svg>
          <span><b>SOLID</b>WORKS</span>
        </Logo>
        <Menu>{menus.map((m) => <MenuItem key={m}>{m}</MenuItem>)}</Menu>
        <PinButton aria-label="Pin menu"><Icon name="pin" size={14} /></PinButton>
        <BarSplit />
        <ToolStrip $left={14}>
          {quickTools.map(([label, icon, drop, color]) => (
            <ToolButton key={label} aria-label={label}><Icon name={icon} />{drop && <Caret color={color} />}</ToolButton>
          ))}
        </ToolStrip>
        <DocTitle>DimXpert DFMXpress *</DocTitle>
        <SearchBox role="search" onSubmit={(e) => e.preventDefault()}>
          <Icon name="prompt" size={15} />
          <input aria-label="Search commands" defaultValue="geometry" />
          <button aria-label="Search"><Icon name="search" size={19} /></button>
          <Caret color="#111" />
        </SearchBox>
        <WindowControls>
          <button aria-label="Sign in"><Icon name="user" /></button>
          <button aria-label="Help"><b>?</b></button>
          <Caret color="#333" />
          <button aria-label="Minimize"><Icon name="min" /></button>
          <button aria-label="Restore"><Icon name="restore" /></button>
          <button aria-label="Close"><Icon name="close" /></button>
        </WindowControls>
      </TitleBar>

      <Ribbon>
        <RibbonGroup $line><BigButton $w={82} $high><Icon name="study" /><span>Design Study</span><Caret /></BigButton></RibbonGroup>
        <RibbonGroup $line>
          {evaluateTools.map(([lines, icon, w, active]) => (
            <BigButton key={icon} $w={w} $active={active}><Icon name={icon} /><span>{lines[0]}{lines[1] && <><br />{lines[1]}</>}</span></BigButton>
          ))}
          <SmallColumns columns={checkColumns} />
        </RibbonGroup>
        <RibbonGroup $pad={2}>
          <SmallColumns columns={surfaceColumns} />
        </RibbonGroup>
        <RibbonGroup $line><BigButton $w={132} $high $active><Icon name="checkDoc" /><span>Check Active Document</span><Caret color="#111" /></BigButton></RibbonGroup>
        <RibbonGroup $grow>
          {xpressTools.map(([lines, icon, w]) => (
            <BigButton key={icon} $w={w}><Icon name={icon} /><span>{lines[0]}<br />{lines[1]}</span></BigButton>
          ))}
          <More aria-label="More commands">»</More>
        </RibbonGroup>
      </Ribbon>

      <Body>
        <DocumentColumn>
          <TabRow>
            {ribbonTabs.map(([label, w]) => <RibbonTab key={label} $w={w} $on={label === 'Evaluate'}>{label}</RibbonTab>)}
            <DocControls>
              <button aria-label="Collapse left"><Icon name="paneLeft" /></button>
              <button aria-label="Collapse right"><Icon name="paneRight" /></button>
              <button aria-label="Minimize document"><Icon name="minGray" /></button>
              <button aria-label="Restore document"><Icon name="restoreGray" /></button>
              <button aria-label="Close document"><Icon name="closeGray" /></button>
            </DocControls>
          </TabRow>
          <Work>
            <SidePanel>
              <Grip><GripDot /></Grip>
              <PanelTabs>
                {['part', 'props', 'config', 'target', 'ballDark'].map((icon) => (
                  <PanelTab key={icon} aria-label={icon} $on={icon === 'props'}><Icon name={icon} /></PanelTab>
                ))}
              </PanelTabs>
              <GeometryPage />
              <Splitter aria-label="Collapse panel"><GripDot /></Splitter>
            </SidePanel>
            <Viewport>
              <BracketModel />
              <AxisTriad />
              <TreeRoot>
                <svg width="5" height="8" viewBox="0 0 5 8" aria-hidden="true"><path d="M0 0v8l4-4z" fill="#111" /></svg>
                <Icon name="part" />DimXpert DFMXpres...
              </TreeRoot>
              <HeadsUp>
                {viewTools.map(([label, icon, drop]) => (
                  <ToolButton key={label} aria-label={label}><Icon name={icon} />{drop && <Caret color="#888" />}</ToolButton>
                ))}
              </HeadsUp>
              <Rail>
                {['homeBlue', 'books', 'folder', 'palette', 'ball', 'props'].map((icon) => (
                  <RailTab key={icon} aria-label={icon} $on={icon === 'homeBlue'}><Icon name={icon} /></RailTab>
                ))}
              </Rail>
            </Viewport>
          </Work>
          <BottomTabs>
            {steps.map(([label, d]) => (
              <StepButton key={label} aria-label={label}><svg width="12" height="12" viewBox="0 0 12 12" aria-hidden="true"><path d={d} fill="#85869c" stroke="#85869c" /></svg></StepButton>
            ))}
            <SheetTab $w={63} $on>Model</SheetTab>
            <SheetTab $w={74}>3D Views</SheetTab>
            <SheetTab $w={119}>Motion Study 1</SheetTab>
          </BottomTabs>
        </DocumentColumn>
        <Resources>
          <ResourcesHead>
            <svg width="10" height="10" viewBox="0 0 10 10" aria-hidden="true"><path d="M4.500 1L1 5l3.500 4M9 1L5.500 5 9 9" fill="none" stroke="#111" strokeWidth="1.500" /></svg>
            <h2>SOLIDWORKS Resources</h2>
            <button aria-label="Panel options"><Icon name="gearLight" size={14} /></button>
            <button aria-label="Pin panel"><Icon name="pinDark" size={14} /></button>
          </ResourcesHead>
          <ResourceBody>
            <ResourceLink href="#welcome"><Icon name="homeBlue" />Welcome to SOLIDWORKS</ResourceLink>
            {resourceGroups.map(([title, items]) => (
              <ResourceGroup key={title}>
                <ResourceTitle><h2>{title}</h2><Chevron dir="up" color="#555" /></ResourceTitle>
                {items.map(([label, icon]) => <ResourceLink key={label} href="#resource"><Icon name={icon} />{label}</ResourceLink>)}
              </ResourceGroup>
            ))}
          </ResourceBody>
        </Resources>
      </Body>

      <StatusBar>
        SOLIDWORKS Premium 2020 SP0.1
        <StatusMode>Editing Part</StatusMode>
        <StatusIcon $l={24} $r={10}><Icon name="rebuild" size={14} /></StatusIcon>
        Geometry Analysis
        <Units>MMGS <Caret color="#888" up /></Units>
        <StatusIcon $l={19} $r={0}><Icon name="tag" size={14} /></StatusIcon>
      </StatusBar>
    </Shell>
  );
}
